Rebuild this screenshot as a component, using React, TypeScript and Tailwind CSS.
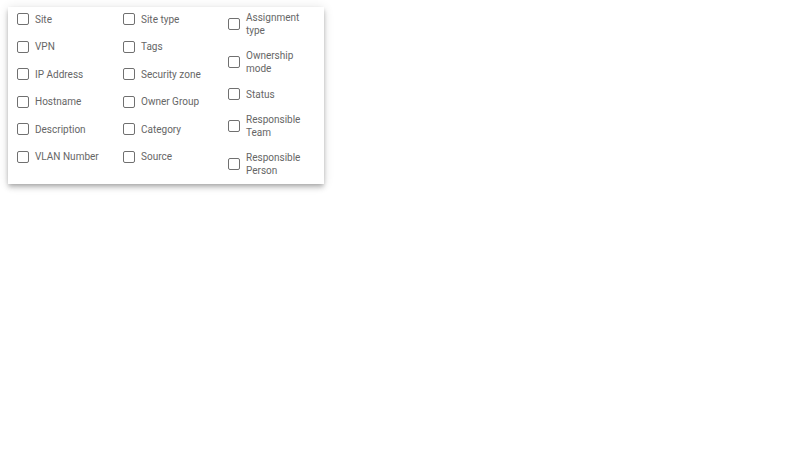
import React from "react";

const col1 = ["Site", "VPN", "IP Address", "Hostname", "Description", "VLAN Number"];
const col2 = ["Site type", "Tags", "Security zone", "Owner Group", "Category", "Source"];
const col3 = ["Assignment type", "Ownership mode", "Status", "Responsible Team", "Responsible Person"];

function Item({ label }: { label: string }) {
  return (
    <label className="flex items-center gap-[6px] min-h-[14px] cursor-pointer">
      <span className="block w-[12px] h-[12px] shrink-0 border-[1.5px] border-[#707070] rounded-[2px] bg-white" />
      <span className="text-[10px] leading-[13px] text-[#666666]">{label}</span>
    </label>
  );
}

export default function App() {
  return (
    <div className="w-[800px] h-[450px] bg-white" style={{ fontFamily: "Roboto, 'Liberation Sans', sans-serif" }}>
      <div className="pt-[7px] pl-[8px]">
        <div className="w-[316px] bg-white pt-[4px] pb-[7px] pl-[9px] pr-[9px] grid grid-cols-[106px_105px_84px] shadow-[0_2px_4px_-1px_rgba(0,0,0,0.2),0_4px_5px_0_rgba(0,0,0,0.14),0_1px_10px_0_rgba(0,0,0,0.12)]">
          <div className="flex flex-col gap-[13.5px] pt-[1px]">
            {col1.map((l) => (
              <Item key={l} label={l} />
            ))}
          </div>
          <div className="flex flex-col gap-[13.5px] pt-[1px]">
            {col2.map((l) => (
              <Item key={l} label={l} />
            ))}
          </div>
          <div className="flex flex-col gap-[12px]">
            {col3.map((l) => (
              <Item key={l} label={l} />
            ))}
          </div>
        </div>
      </div>
    </div>
  );
}
